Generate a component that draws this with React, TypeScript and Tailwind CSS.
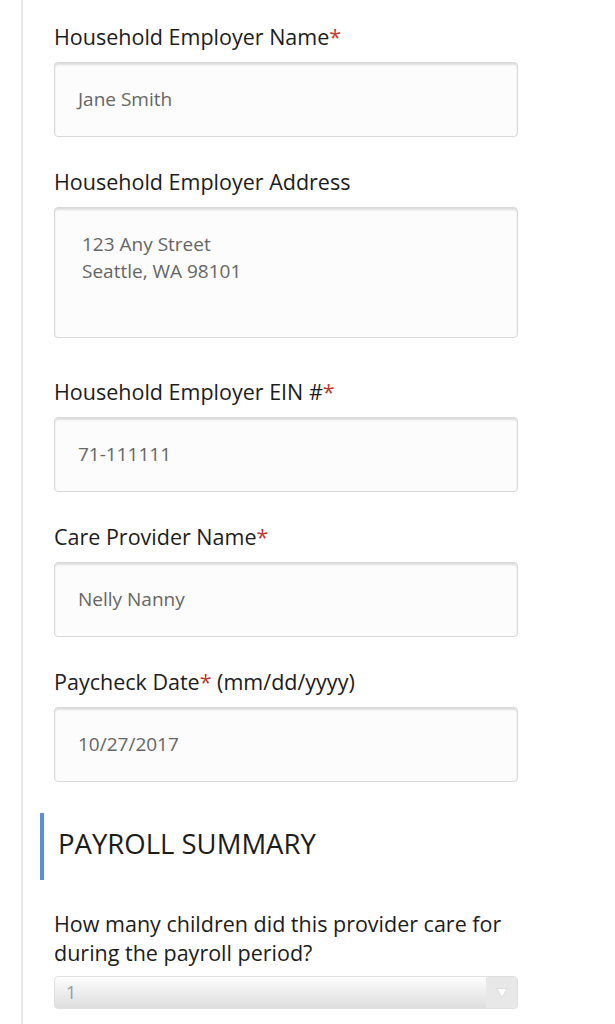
const fields = [
  { label: 'Household Employer Name', required: true, value: 'Jane Smith' },
  { label: 'Household Employer Address', required: false, lines: ['123 Any Street', 'Seattle, WA 98101'] },
  { label: 'Household Employer EIN #', required: true, value: '71-111111' },
  { label: 'Care Provider Name', required: true, value: 'Nelly Nanny' },
  { label: 'Paycheck Date', required: true, suffix: ' (mm/dd/yyyy)', value: '10/27/2017' },
];

type Field = (typeof fields)[number] & { lines?: string[]; suffix?: string; value?: string };

function FormField({ field }: { field: Field }) {
  return (
    <div>
      <label className="block text-[21.5px] leading-[28px] font-medium text-[#1c1c1c] mb-[11px]">
        {field.label}
        {field.required && <span className="text-[#c4392b]">*</span>}
        {field.suffix}
      </label>
      {field.lines ? (
        <div className="h-[131px] mb-[40px] rounded-[4px] border border-[#d8d8d8] bg-[#fbfcfb] shadow-[inset_0_2px_2px_rgba(0,0,0,0.12)] pl-[27px] pt-[23px] text-[19px] leading-[27px] text-[#666]">
          {field.lines.map((line) => (
            <div key={line}>{line}</div>
          ))}
        </div>
      ) : (
        <div className="h-[75px] mb-[31px] flex items-center rounded-[4px] border border-[#d8d8d8] bg-[#fbfcfb] shadow-[inset_0_2px_2px_rgba(0,0,0,0.12)] pl-[23px] text-[19px] text-[#666]">
          {field.value}
        </div>
      )}
    </div>
  );
}

export default function App() {
  return (
    <div className="min-h-screen bg-white font-['Open_Sans',sans-serif]">
      <div className="ml-[21px] min-h-screen border-l-2 border-[#e8e8e8] pl-[31px] pr-[97px] pt-[23px] pb-6">
        {fields.map((f) => (
          <FormField key={f.label} field={f as Field} />
        ))}

        {/* Section header */}
        <div className="-ml-[14px] mt-[1px] flex h-[67px] items-center border-l-4 border-[#5b8fd6] pl-[14px] pb-[6px]">
          <h2 className="text-[27.5px] leading-[34px] text-[#1c1c1c]">PAYROLL SUMMARY</h2>
        </div>

        <p className="mt-[29px] text-[21.5px] leading-[29px] font-medium text-[#1c1c1c]">
          How many children did this provider care for during the payroll period?
        </p>

        <div className="mt-[9px] flex h-[33px] items-stretch overflow-hidden rounded-[4px] border border-[#e0e0e0] bg-gradient-to-b from-[#fdfdfd] to-[#dedede]">
          <div className="flex flex-1 items-center pl-[11px] text-[18px] text-[#9a9a9a]">1</div>
          <div className="flex w-[31px] items-center justify-center bg-[#e8e8e8]">
            <svg width="12" height="10" viewBox="0 0 12 10">
              <path d="M0.5 0.5h11L6 9.5z" fill="#ffffff" stroke="#d4d4d4" strokeWidth="0.8" />
            </svg>
          </div>
        </div>
      </div>
    </div>
  );
}
